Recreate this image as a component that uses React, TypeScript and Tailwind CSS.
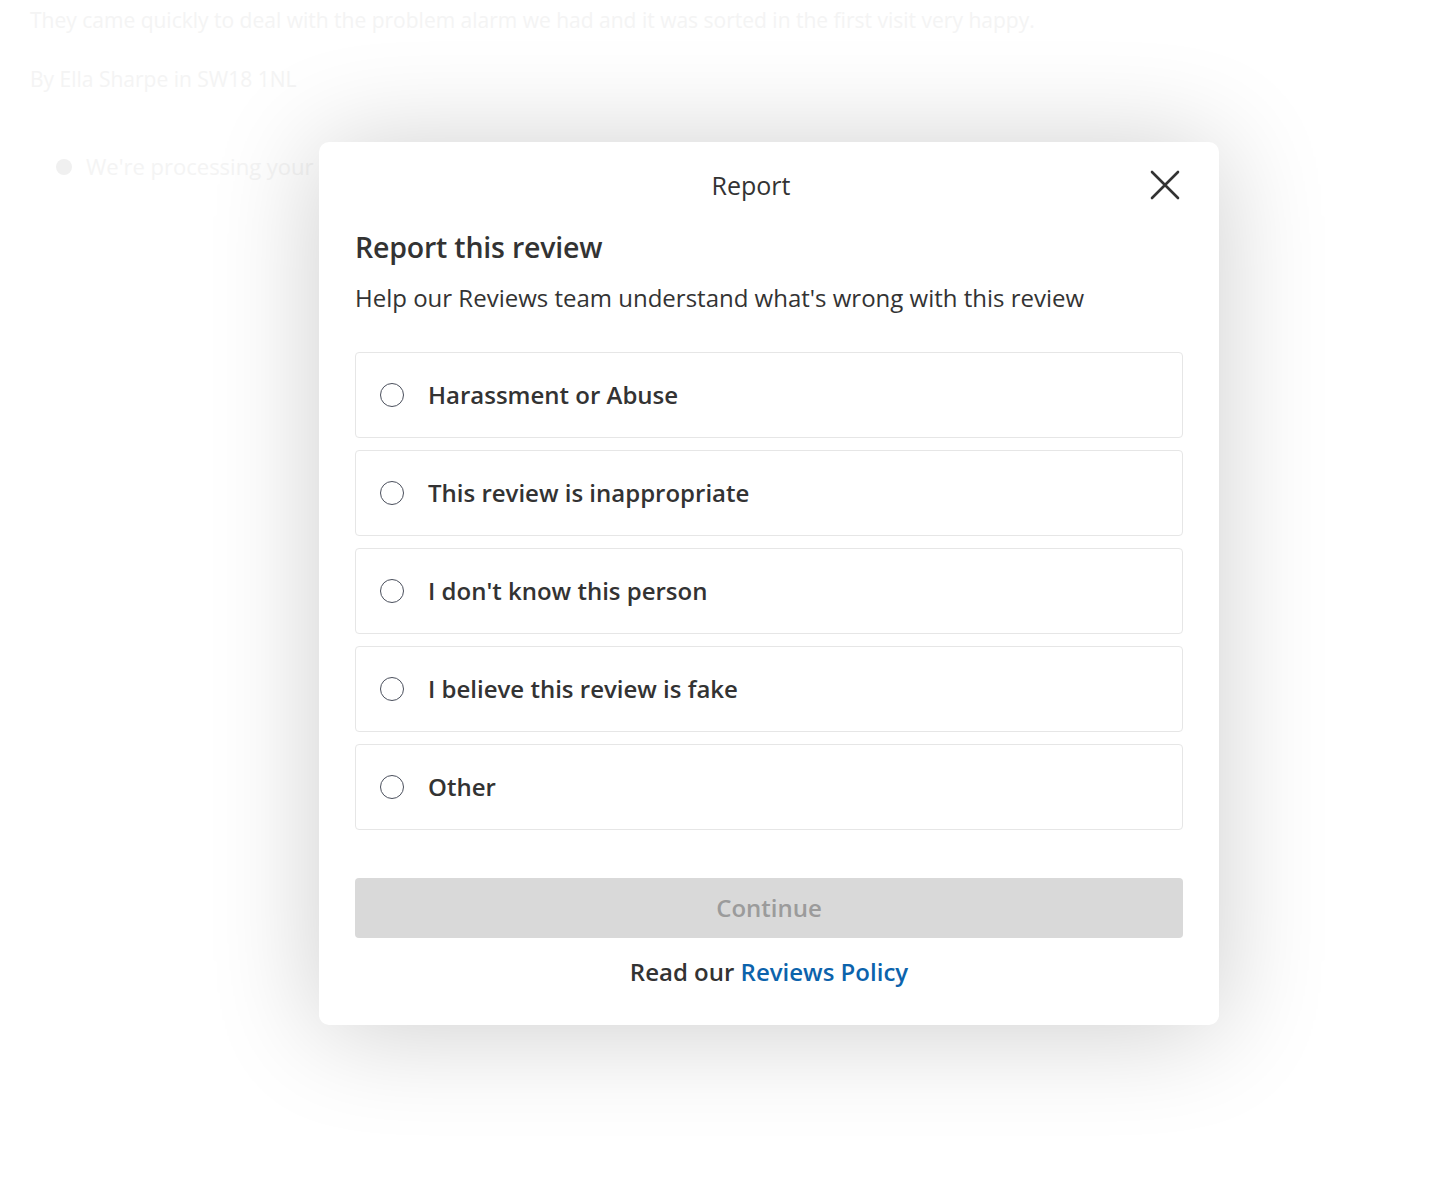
import React from "react";

const options = [
  "Harassment or Abuse",
  "This review is inappropriate",
  "I don't know this person",
  "I believe this review is fake",
  "Other",
];

export default function App() {
  return (
    <div
      className="relative w-[1435px] h-[1200px] bg-white overflow-hidden"
      style={{ fontFamily: '"Open Sans", "Noto Sans", sans-serif' }}
    >
      {/* faint background page */}
      <div className="flex flex-col pl-[30px] pt-[6px] text-[#f4f4f4]">
        <p className="text-[21px] leading-[28px]">
          They came quickly to deal with the problem alarm we had and it was sorted in the first visit very happy.
        </p>
        <p className="mt-[32px] text-[21px] leading-[26px]">By Ella Sharpe in SW18 1NL</p>
        <div className="mt-[58px] ml-[26px] flex items-center gap-[14px] text-[22px]">
          <span className="w-[16px] h-[16px] rounded-full bg-[#f0f0f0]" />
          <span>We're processing your report</span>
        </div>
      </div>

      {/* modal overlay */}
      <div className="absolute left-[319px] top-[142px] w-[900px] bg-white rounded-[10px] shadow-[0_5px_110px_rgba(0,0,0,0.2)] px-[36px] pt-[26px] pb-[37px] text-[#333333]">
        <div className="flex items-center h-[34px]">
          <span className="flex-1 text-center text-[25px] leading-[34px] text-[#333333]">Report</span>
          <button className="w-[36px] h-[34px] flex items-center justify-center">
            <svg width="32" height="32" viewBox="0 0 32 32" fill="none">
              <path d="M3 3 L29 29 M29 3 L3 29" stroke="#333333" strokeWidth="2.6" strokeLinecap="round" />
            </svg>
          </button>
        </div>

        <h2 className="mt-[26px] text-[28.5px] leading-[38px] font-semibold tracking-[-0.2px]">Report this review</h2>
        <p className="mt-[16px] text-[24px] leading-[32px] text-[#333333]">
          Help our Reviews team understand what's wrong with this review
        </p>

        <div className="mt-[38px] flex flex-col gap-[12px]">
          {options.map((o) => (
            <label
              key={o}
              className="flex items-center h-[86px] border border-[#e6e6e6] rounded-[4px] pl-[24px] cursor-pointer"
            >
              <span className="w-[24px] h-[24px] rounded-full border-[1.5px] border-[#4a4f5c] shrink-0" />
              <span className="ml-[24px] text-[24px] font-semibold text-[#333333]">{o}</span>
            </label>
          ))}
        </div>

        <button className="mt-[48px] w-full h-[60px] rounded-[4px] bg-[#d9d9d9] text-[#9b9b9b] text-[24px] font-semibold">
          Continue
        </button>

        <p className="mt-[18px] text-center text-[24px] font-semibold leading-[32px] text-[#333333]">
          Read our <span className="text-[#0c63ac]">Reviews Policy</span>
        </p>
      </div>
    </div>
  );
}
